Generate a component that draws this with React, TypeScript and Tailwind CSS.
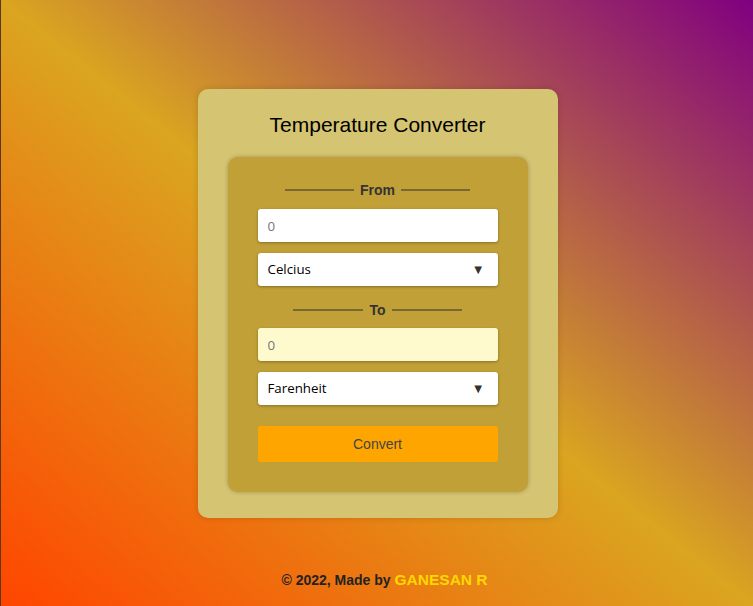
import React, { useState } from 'react';

const Legend = ({ label, line }: { label: string; line: string }) => (
  <div className="flex items-center justify-center gap-[6px] h-[16px]">
    <span className={`h-[2px] bg-[#7a6832] ${line}`} />
    <span className="text-[14px] font-bold text-[#333] leading-[16px]">{label}</span>
    <span className={`h-[2px] bg-[#7a6832] ${line}`} />
  </div>
);

const Select = ({ value }: { value: string }) => (
  <div className="relative h-[33px] rounded-[3px] bg-white shadow-[0_1px_3px_rgba(0,0,0,0.3)] flex items-center px-[10px]">
    <span className="text-[13.3px] text-black">{value}</span>
    <span className="absolute right-[13px] top-[8px] text-[13px] leading-[16px] text-[#333]">▼</span>
  </div>
);

export default function App() {
  const [from, setFrom] = useState('');
  const [to, setTo] = useState('');

  return (
    <div
      className="h-[606px] w-full flex flex-col items-center border-l border-[#5a3a14] bg-[linear-gradient(to_top_right,#ff4500,#daa520,#800080)]"
      style={{ fontFamily: '"Liberation Sans", Arial, sans-serif' }}
    >
      <div className="mt-[89px] ml-[1px] w-[360px] rounded-[10px] bg-[#d5c471] px-[30px] pt-[24px] pb-[26px] shadow-[0_0_6px_rgba(0,0,0,0.15)]">
        <h1 className="text-center text-[21px] leading-[24px] text-black">Temperature Converter</h1>
        <div
          className="mt-[20px] rounded-[10px] bg-[#c1a037] px-[30px] pt-[25px] pb-[30px] shadow-[0_0_4px_rgba(0,0,0,0.25)]"
          style={{ fontFamily: '"Open Sans", "Noto Sans", sans-serif' }}
        >
          <div style={{ fontFamily: '"Liberation Sans", Arial, sans-serif' }}>
            <Legend label="From" line="w-[69px]" />
          </div>
          <input
            value={from}
            onChange={(e) => setFrom(e.target.value)}
            placeholder="0"
            className="mt-[11px] block w-full h-[33px] rounded-[3px] bg-white px-[10px] text-[13.3px] outline-none placeholder:text-[#757575] shadow-[0_1px_3px_rgba(0,0,0,0.3)]"
          />
          <div className="mt-[11px]">
            <Select value="Celcius" />
          </div>
          <div className="mt-[16px]" style={{ fontFamily: '"Liberation Sans", Arial, sans-serif' }}>
            <Legend label="To" line="w-[70px]" />
          </div>
          <input
            value={to}
            onChange={(e) => setTo(e.target.value)}
            placeholder="0"
            className="mt-[10px] block w-full h-[33px] rounded-[3px] bg-[#fffacd] px-[10px] text-[13.3px] outline-none placeholder:text-[#757575] shadow-[0_1px_3px_rgba(0,0,0,0.3)]"
          />
          <div className="mt-[11px]">
            <Select value="Farenheit" />
          </div>
          <button
            className="mt-[21px] block w-full h-[36px] rounded-[3px] bg-[#ffa500] text-[14px] text-[#444]"
            style={{ fontFamily: '"Liberation Sans", Arial, sans-serif' }}
          >
            Convert
          </button>
        </div>
      </div>
      <footer className="mt-auto mb-[17px] ml-[15px] text-[14px] leading-[17px] font-bold text-[#222]">
        © 2022, Made by <span className="text-[15.5px] text-[#ffd700]">GANESAN R</span>
      </footer>
    </div>
  );
}
